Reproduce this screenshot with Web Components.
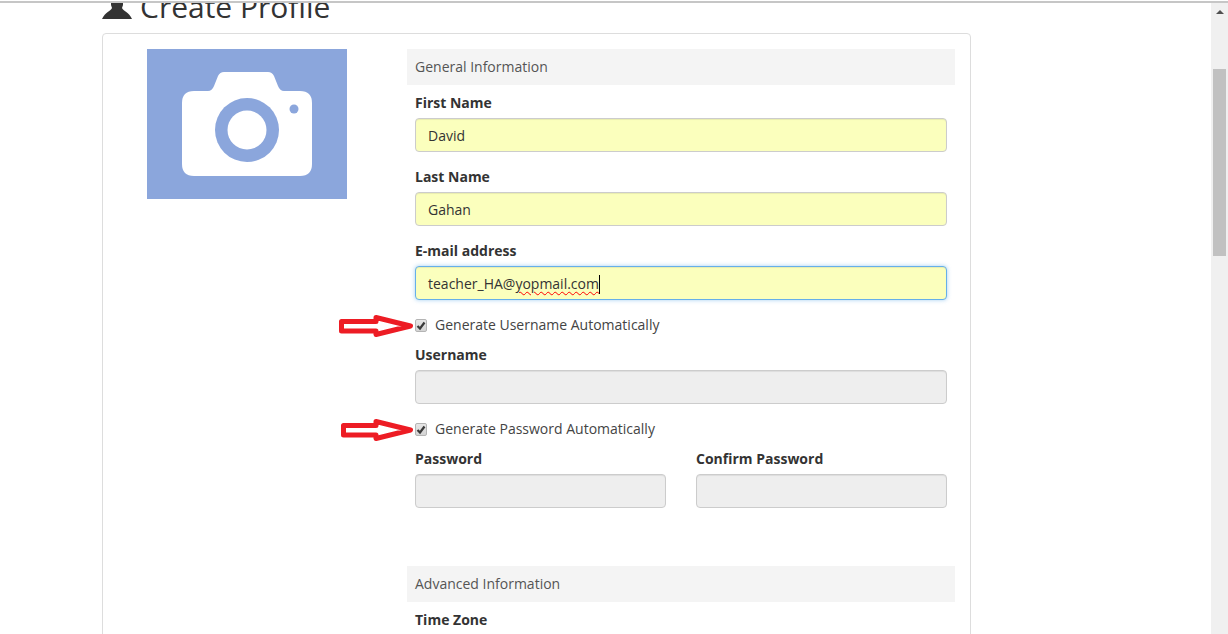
<!DOCTYPE html>
<html>
<head>
<meta charset="utf-8">
<title>Create Profile</title>
<style>
  html, body { margin: 0; padding: 0; height: 100%; overflow: hidden; background: #fff; }
  body { font-family: "Open Sans", "Liberation Sans", sans-serif; font-size: 14px; line-height: 20px; color: #333; }
</style>
</head>
<body>
<profile-page>
  <page-heading>Create Profile</page-heading>
  <profile-card>
    <photo-box slot="photo"></photo-box>
    <section-head>General Information</section-head>
    <form-field label="First Name" tone="filled">David</form-field>
    <form-field label="Last Name" tone="filled">Gahan</form-field>
    <form-field label="E-mail address" tone="focus">teacher_HA@<span style="text-decoration: underline wavy #f00; text-decoration-thickness: 1px; text-underline-offset: 2px;">yopmail.com</span><span style="display:inline-block;width:1px;height:19px;background:#000;vertical-align:-5px;"></span></form-field>
    <check-row tail="3.5">Generate Username Automatically</check-row>
    <form-field label="Username" tone="off"></form-field>
    <check-row tail="5.5">Generate Password Automatically</check-row>
    <field-pair>
      <form-field label="Password" tone="off"></form-field>
      <form-field label="Confirm Password" tone="off"></form-field>
    </field-pair>
    <section-head style="margin-top: 58px;">Advanced Information</section-head>
    <form-field label="Time Zone" tone="none"></form-field>
  </profile-card>
</profile-page>

<script>
class ProfilePage extends HTMLElement {
  constructor() {
    super();
    this.attachShadow({ mode: "open" }).innerHTML = `
    <style>
      :host { display: flex; height: 633px; margin-top: 1px; box-sizing: border-box; border-top: 2px solid #c6c6c6; overflow: hidden; }
      .main { flex: 1; min-width: 0; padding-left: 102px; overflow: hidden; }
      .column { width: 869px; }
      .bar { width: 17px; flex: none; background: #f0f0f0; display: flex; flex-direction: column; align-items: center; }
      .up { margin-top: 7px; width: 0; height: 0; border-left: 4px solid transparent; border-right: 4px solid transparent; border-bottom: 4px solid #505050; }
      .thumb { width: 13px; height: 187px; margin-top: 55px; background: #c1c1c1; }
    </style>
    <div class="main"><div class="column"><slot></slot></div></div>
    <div class="bar"><div class="up"></div><div class="thumb"></div></div>`;
  }
}

class PageHeading extends HTMLElement {
  constructor() {
    super();
    this.attachShadow({ mode: "open" }).innerHTML = `
    <style>
      :host { display: block; height: 30px; overflow: hidden; font-size: 30px; line-height: 42px; color: #333; }
      .inner { display: flex; gap: 8px; align-items: flex-start; margin-top: -17px; }
      svg { width: 30px; height: 19px; flex: none; margin-top: 14px; }
    </style>
    <div class="inner">
      <svg viewBox="0 0 30 19"><path d="M9 0 H21 V5 L20 8 C21 11 27 12 30 19 H0 C3 12 9 11 10 8 L9 5 Z" fill="#333"/></svg>
      <span><slot></slot></span>
    </div>`;
  }
}

class ProfileCard extends HTMLElement {
  constructor() {
    super();
    this.attachShadow({ mode: "open" }).innerHTML = `
    <style>
      :host { display: flex; gap: 60px; box-sizing: border-box; width: 869px; min-height: 800px; padding: 15px 15px 15px 44px; border: 1px solid #ddd; border-radius: 4px; background: #fff; }
      .form { width: 548px; flex: none; }
    </style>
    <div><slot name="photo"></slot></div>
    <div class="form"><slot></slot></div>`;
  }
}

class PhotoBox extends HTMLElement {
  constructor() {
    super();
    this.attachShadow({ mode: "open" }).innerHTML = `
    <style>
      :host { display: block; width: 200px; height: 150px; background: #8ba6dc; }
      svg { display: block; }
    </style>
    <svg width="200" height="150" viewBox="0 0 200 150">
      <path fill="#fff" d="M47 42 H61 Q65 42 67 37 L71 27 Q73 23 77 23 H121 Q125 23 127 27 L131 37 Q133 42 137 42 H153 Q165 42 165 54 V115 Q165 127 153 127 H47 Q35 127 35 115 V54 Q35 42 47 42 Z"/>
      <circle cx="100" cy="81" r="32" fill="#8ba6dc"/>
      <circle cx="100" cy="81" r="19.5" fill="#fff"/>
      <circle cx="147" cy="60" r="4.5" fill="#8ba6dc"/>
    </svg>`;
  }
}

class SectionHead extends HTMLElement {
  constructor() {
    super();
    this.attachShadow({ mode: "open" }).innerHTML = `
    <style>
      :host { display: block; height: 36px; box-sizing: border-box; padding: 8px; line-height: 20px; background: #f4f4f4; color: #555; }
    </style>
    <slot></slot>`;
  }
}

class FormField extends HTMLElement {
  constructor() {
    super();
    const tone = this.getAttribute("tone");
    const label = this.getAttribute("label");
    this.attachShadow({ mode: "open" }).innerHTML = `
    <style>
      :host { display: block; margin: 8px 8px 0; }
      :host(.col) { margin: 0; flex: 1; }
      .label { font-weight: 700; line-height: 20px; margin-bottom: 5px; color: #333; }
      .box { box-sizing: border-box; height: 34px; padding: 7px 12px 5px; border: 1px solid #ccc; border-radius: 4px; line-height: 20px; color: #333; box-shadow: inset 0 1px 1px rgba(0,0,0,.075); white-space: nowrap; }
      .filled { background: #fbffbd; }
      .focus { background: #fbffbd; border-color: #66afe9; box-shadow: inset 0 1px 1px rgba(0,0,0,.075), 0 0 4px rgba(102,175,233,.6); }
      .off { background: #eee; }
      .none { display: none; }
    </style>
    <div class="label">${label}</div>
    <div class="box ${tone}"><slot></slot></div>`;
  }
  connectedCallback() {
    if (this.parentElement.tagName === "FIELD-PAIR") {
      this.classList.add("col");
      return;
    }
    const prev = this.previousElementSibling;
    if (prev && prev.tagName === "FORM-FIELD") this.style.marginTop = "15px";
    if (prev && prev.tagName === "CHECK-ROW") this.style.marginTop = "10px";
  }
}

class FieldPair extends HTMLElement {
  constructor() {
    super();
    this.attachShadow({ mode: "open" }).innerHTML = `
    <style>
      :host { display: flex; gap: 30px; margin: 10px 8px 0; }
    </style>
    <slot></slot>`;
  }
}

class CheckRow extends HTMLElement {
  constructor() {
    super();
    const tail = this.getAttribute("tail");
    this.attachShadow({ mode: "open" }).innerHTML = `
    <style>
      :host { display: flex; align-items: center; gap: 8px; position: relative; height: 20px; margin: 15px 8px 0; color: #444; }
      .tick { box-sizing: border-box; width: 12px; height: 13px; border: 1px solid #b4b4b4; border-radius: 2px; background: linear-gradient(#e6e6e6, #d4d4d4); }
      .tick svg { display: block; }
      .arrow { position: absolute; left: -77px; top: -2px; }
    </style>
    <svg class="arrow" width="78" height="26" viewBox="0 0 78 26">
      <path d="M${tail} 8.500 H38 V4.500 L72.500 13 L38 21.500 V18 H${tail} Z" fill="#fff" stroke="#ed1c24" stroke-width="5" stroke-linejoin="round"/>
    </svg>
    <div class="tick"><svg width="10" height="11" viewBox="0 0 10 11"><path d="M1.500 6 L4 8.500 L8.500 2.500" fill="none" stroke="#3a3a3a" stroke-width="2.200"/></svg></div>
    <span><slot></slot></span>`;
  }
}

customElements.define("profile-page", ProfilePage);
customElements.define("page-heading", PageHeading);
customElements.define("profile-card", ProfileCard);
customElements.define("photo-box", PhotoBox);
customElements.define("section-head", SectionHead);
customElements.define("form-field", FormField);
customElements.define("field-pair", FieldPair);
customElements.define("check-row", CheckRow);
</script>
</body>
</html>
